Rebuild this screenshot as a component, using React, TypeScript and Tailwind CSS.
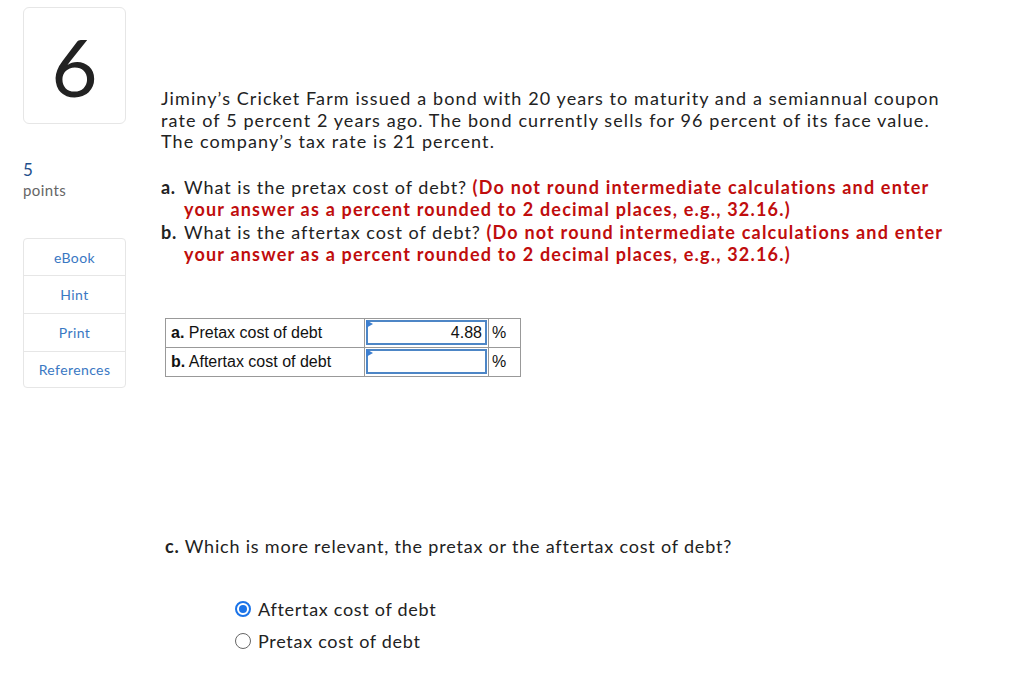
import React from 'react';

const font = { fontFamily: 'Lato, "Open Sans", sans-serif' };

function Radio({ checked }: { checked: boolean }) {
  return checked ? (
    <span className="inline-flex h-[16px] w-[16px] items-center justify-center rounded-full border-2 border-[#1a73e8] bg-white">
      <span className="h-[8px] w-[8px] rounded-full bg-[#1a73e8]" />
    </span>
  ) : (
    <span className="inline-block h-[16px] w-[16px] rounded-full border border-[#666] bg-white" />
  );
}

export default function App() {
  return (
    <div className="flex min-h-[679px] w-[1024px] bg-white text-[#222]" style={font}>
      {/* left rail */}
      <div className="ml-[23px] mt-[7px] flex w-[103px] flex-col">
        <div className="flex h-[117px] items-center justify-center rounded-md border border-[#e6e6e6] text-[80px] font-normal leading-none text-[#222]">
          6
        </div>
        <div className="mt-[36px] text-[17px] leading-[20px] text-[#1f4f8b]">5</div>
        <div className="text-[15px] leading-[20px] tracking-[0.4px] text-[#666]">points</div>
        <div className="mt-[38px] flex flex-col rounded border border-[#e6e6e6] text-[14px] tracking-[0.4px] text-[#3a78c3]">
          <div className="flex h-[37px] items-center justify-center border-b border-[#e6e6e6]">eBook</div>
          <div className="flex h-[38px] items-center justify-center border-b border-[#e6e6e6]">Hint</div>
          <div className="flex h-[38px] items-center justify-center border-b border-[#e6e6e6]">Print</div>
          <div className="flex h-[35px] items-center justify-center">References</div>
        </div>
      </div>

      {/* question */}
      <div className="ml-[35px] mt-[88px] w-[820px] whitespace-nowrap">
        <p className="text-[18px] leading-[21.5px] tracking-[1.1px]">
          Jiminy’s Cricket Farm issued a bond with 20 years to maturity and a semiannual coupon
          <br />
          rate of 5 percent 2 years ago. The bond currently sells for 96 percent of its face value.
          <br />
          The company’s tax rate is 21 percent.
        </p>

        <div className="mt-[23px] text-[18px] leading-[22.5px] tracking-[0.95px]">
          <div className="flex">
            <span className="w-[23px] shrink-0 font-bold tracking-[0.7px]">a.</span>
            <span>
              What is the pretax cost of debt?{' '}
              <span className="font-bold tracking-[1.2px] text-[#c00d0d]">
                (Do not round intermediate calculations and enter
                <br />
                your answer as a percent rounded to 2 decimal places, e.g., 32.16.)
              </span>
            </span>
          </div>
          <div className="flex">
            <span className="w-[23px] shrink-0 font-bold tracking-[0.7px]">b.</span>
            <span>
              What is the aftertax cost of debt?{' '}
              <span className="font-bold tracking-[1.2px] text-[#c00d0d]">
                (Do not round intermediate calculations and enter
                <br />
                your answer as a percent rounded to 2 decimal places, e.g., 32.16.)
              </span>
            </span>
          </div>
        </div>

        <table
          className="ml-[4px] mt-[52px] border-collapse text-[16px] tracking-normal text-[#111]"
          style={{ fontFamily: '"Liberation Sans", Arial, sans-serif' }}
        >
          <tbody>
            <tr className="h-[29px]">
              <td className="w-[199px] border border-[#999] px-[5px]">
                <b>a.</b> Pretax cost of debt
              </td>
              <td className="relative w-[124px] border border-[#999] p-0">
                <div className="mx-[1px] flex h-[25px] items-center justify-end border-2 border-[#4d86c6] pr-[3px]">4.88</div>
                <span className="absolute left-[1px] top-[1px] h-0 w-0 border-y-[4px] border-l-[7px] border-y-transparent border-l-[#3d7fd0]" />
              </td>
              <td className="w-[32px] border border-[#999] px-[3px]">%</td>
            </tr>
            <tr className="h-[29px]">
              <td className="border border-[#999] px-[5px]">
                <b>b.</b> Aftertax cost of debt
              </td>
              <td className="relative border border-[#999] p-0">
                <div className="mx-[1px] flex h-[25px] items-center justify-end border-2 border-[#4d86c6] pr-[3px]" />
                <span className="absolute left-[1px] top-[1px] h-0 w-0 border-y-[4px] border-l-[7px] border-y-transparent border-l-[#3d7fd0]" />
              </td>
              <td className="border border-[#999] px-[3px]">%</td>
            </tr>
          </tbody>
        </table>

        <p className="ml-[4px] mt-[158px] text-[18px] leading-[22px] tracking-[0.8px]">
          <b>c.</b> Which is more relevant, the pretax or the aftertax cost of debt?
        </p>

        <div className="ml-[74px] mt-[41px] flex flex-col gap-[10px] text-[18px] leading-[22px] tracking-[0.7px]">
          <label className="flex items-center gap-[7px]">
            <Radio checked />
            Aftertax cost of debt
          </label>
          <label className="flex items-center gap-[7px]">
            <Radio checked={false} />
            Pretax cost of debt
          </label>
        </div>
      </div>
    </div>
  );
}
